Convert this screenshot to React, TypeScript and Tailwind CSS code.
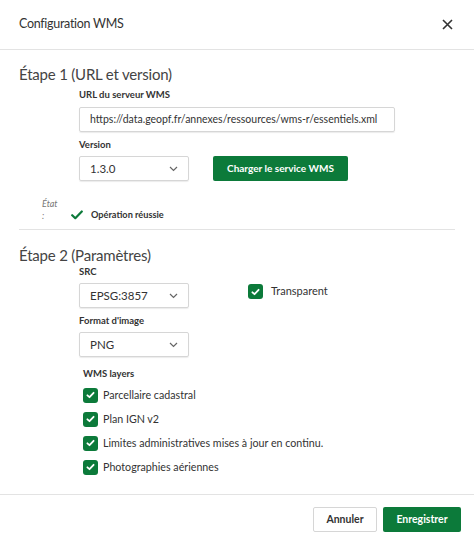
import React from "react";

const font = { fontFamily: "Lato, 'Noto Sans', sans-serif" };

function Chevron() {
  return (
    <svg width="9" height="6" viewBox="0 0 9 6" className="text-[#666]">
      <path d="M1 1 L4.5 4.5 L8 1" fill="none" stroke="currentColor" strokeWidth="1.2" />
    </svg>
  );
}

function Check() {
  return (
    <span className="flex h-[15px] w-[15px] shrink-0 items-center justify-center rounded-[3px] bg-[#0c7a3a]">
      <svg width="9" height="8" viewBox="0 0 9 8">
        <path d="M1.4 4.3 L3.5 6.2 L7.6 1.8" fill="none" stroke="white" strokeWidth="1.8" strokeLinecap="round" strokeLinejoin="round" />
      </svg>
    </span>
  );
}

function Select({ value }: { value: string }) {
  return (
    <div className="flex h-[25px] w-[110px] items-center justify-between rounded-[2px] border border-[#d6d6d6] pl-[10px] pr-[10px] text-[11.5px] text-[#333] shadow-[0_1px_1px_rgba(0,0,0,0.08)]">
      <span>{value}</span>
      <Chevron />
    </div>
  );
}

function Label({ children }: { children: React.ReactNode }) {
  return <div className="text-[9.5px] font-bold leading-[14px] text-[#333]">{children}</div>;
}

function Layer({ text }: { text: string }) {
  return (
    <div className="flex h-[24px] items-center gap-[5px]">
      <Check />
      <span className="text-[10.7px] text-[#333]">{text}</span>
    </div>
  );
}

export default function App() {
  return (
    <div className="flex h-[545px] w-[474px] flex-col bg-white" style={font}>
      <div className="flex h-[50px] shrink-0 items-center justify-between border-b border-[#e3e3e3] pl-[19px] pr-[21px]">
        <span className="text-[12.5px] tracking-[-0.3px] text-[#333]">Configuration WMS</span>
        <svg width="11" height="11" viewBox="0 0 11 11">
          <path d="M1 1 L10 10 M10 1 L1 10" stroke="#333" strokeWidth="1.6" />
        </svg>
      </div>

      <div className="flex flex-1 flex-col px-[19px]">
        <h2 className="mt-[12px] text-[15px] leading-[24px] tracking-[-0.2px] text-[#444]">Étape 1 (URL et version)</h2>
        <div className="mt-[2px] pl-[60px]">
          <Label>URL du serveur WMS</Label>
          <div className="mt-[5px] flex h-[25px] w-[316px] items-center whitespace-nowrap rounded-[2px] border border-[#d6d6d6] pl-[10px] text-[10.5px] text-[#333] shadow-[0_1px_1px_rgba(0,0,0,0.08)]">
            https://data.geopf.fr/annexes/ressources/wms-r/essentiels.xml
          </div>
          <div className="mt-[6px]">
            <Label>Version</Label>
          </div>
          <div className="mt-[4px] flex items-center gap-[24px]">
            <Select value="1.3.0" />
            <button className="flex h-[25px] w-[135px] items-center justify-center rounded-[2px] bg-[#0c7a3a] text-[10px] font-bold text-white">
              Charger le service WMS
            </button>
          </div>
        </div>

        <div className="mt-[17px] flex items-end pl-[23px]">
          <div className="w-[12px] text-[9px] italic leading-[12px] text-[#777]">
            État :
          </div>
          <div className="ml-[17px] flex items-center gap-[8px]">
            <svg width="12" height="10" viewBox="0 0 12 10">
              <path d="M1.2 5.2 L4.3 8.2 L10.8 1.5" fill="none" stroke="#0c7a3a" strokeWidth="2.2" strokeLinecap="round" strokeLinejoin="round" />
            </svg>
            <span className="text-[9.2px] font-bold leading-[14px] text-[#333]">Opération réussie</span>
          </div>
        </div>

        <div className="mt-[7px] h-px bg-[#e3e3e3]" />

        <h2 className="mt-[15px] text-[15px] leading-[20px] tracking-[-0.2px] text-[#444]">Étape 2 (Paramètres)</h2>
        <div className="pl-[60px]">
          <Label>SRC</Label>
          <div className="mt-[4px] flex items-start gap-[59px]">
            <Select value="EPSG:3857" />
            <div className="flex h-[17px] items-center gap-[8px]">
              <Check />
              <span className="text-[11px] text-[#333]">Transparent</span>
            </div>
          </div>
          <div className="mt-[6px]">
            <Label>Format d'image</Label>
          </div>
          <div className="mt-[4px]">
            <Select value="PNG" />
          </div>
          <div className="mt-[10px] pl-[4px]">
            <Label>WMS layers</Label>
            <div className="mt-[2px] flex flex-col">
              <Layer text="Parcellaire cadastral" />
              <Layer text="Plan IGN v2" />
              <Layer text="Limites administratives mises à jour en continu." />
              <Layer text="Photographies aériennes" />
            </div>
          </div>
        </div>
      </div>

      <div className="flex h-[51px] shrink-0 items-start justify-end gap-[6px] border-t border-[#e3e3e3] pr-[13px] pt-[12px]">
        <button className="flex h-[25px] w-[64px] items-center justify-center rounded-[2px] border border-[#d6d6d6] text-[10.5px] font-bold text-[#333]">
          Annuler
        </button>
        <button className="flex h-[25px] w-[78px] items-center justify-center rounded-[2px] bg-[#0c7a3a] text-[10.5px] font-bold text-white">
          Enregistrer
        </button>
      </div>
    </div>
  );
}
